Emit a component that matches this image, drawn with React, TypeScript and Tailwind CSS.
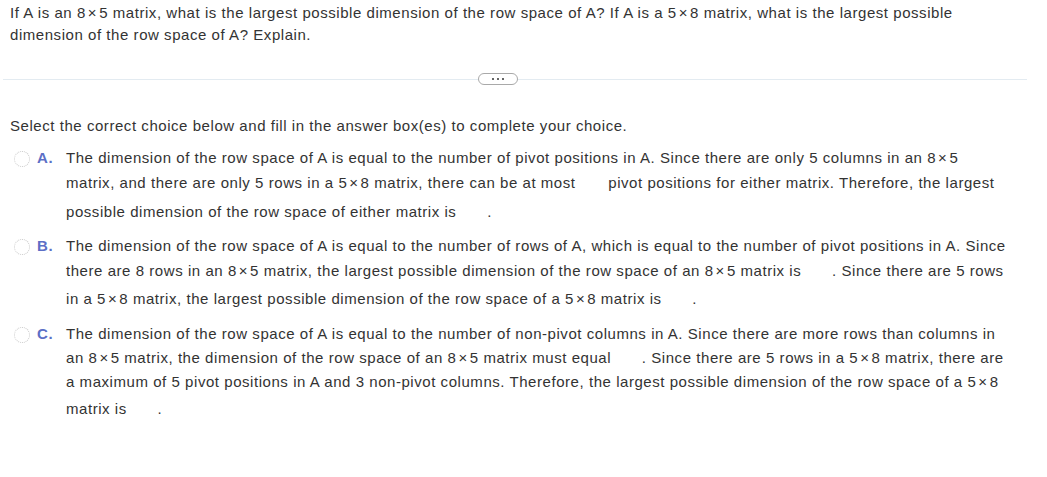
import React from "react";

const FONT = { fontFamily: '"Liberation Sans", Arial, sans-serif', letterSpacing: "0.55px" };

// Blank answer box (rendered invisible in the screenshot).
function Blank({ w = 30 }: { w?: number }) {
  return <span className="inline-block" style={{ width: w }} />;
}

function Times() {
  return <span className="mx-[2px]">×</span>;
}

function Radio() {
  return (
    <span className="mt-[3px] inline-block h-[16px] w-[16px] shrink-0 rounded-full border border-dotted border-[#c8c8c8] bg-white" />
  );
}

function Choice({
  label,
  lines,
  heights,
}: {
  label: string;
  lines: React.ReactNode[];
  heights: number[];
}) {
  return (
    <div className="flex pl-[14px]">
      <Radio />
      <span className="ml-[7px] w-[29px] font-bold text-[#5c6fc6]">{label}</span>
      <div>
        {lines.map((l, i) => (
          <div key={i} style={{ height: heights[i] }}>
            {l}
          </div>
        ))}
      </div>
    </div>
  );
}

export default function App() {
  return (
    <div className="h-[477px] w-[1047px] bg-white text-[15px] leading-[20px] text-[#333]" style={FONT}>
      <div className="px-[10px] pt-[3px]">
        <div className="h-[22px]">
          If A is an 8<Times />5 matrix, what is the largest possible dimension of the row space of A? If A is a 5
          <Times />8 matrix, what is the largest possible
        </div>
        <div className="h-[22px]">dimension of the row space of A? Explain.</div>
      </div>

      <div className="relative mx-[3px] mt-[32px] h-[1px] w-[1024px] bg-[#e3ebf1]">
        <div className="absolute left-[475px] top-[-6px] flex h-[12px] w-[40px] items-center justify-center gap-[3px] rounded-full border border-[#a9a9a9] bg-white">
          <span className="h-[2px] w-[2px] bg-[#666]" />
          <span className="h-[2px] w-[2px] bg-[#666]" />
          <span className="h-[2px] w-[2px] bg-[#666]" />
        </div>
      </div>

      <div className="px-[10px] pt-[36px]">
        Select the correct choice below and fill in the answer box(es) to complete your choice.
      </div>

      <div className="mt-[12px]">
        <Choice
          label="A."
          heights={[25, 29, 34]}
          lines={[
            <>
              The dimension of the row space of A is equal to the number of pivot positions in A. Since there are only 5 columns in an 8
              <Times />5
            </>,
            <>
              matrix, and there are only 5 rows in a 5<Times />8 matrix, there can be at most <Blank w={28} />
              pivot positions for either matrix. Therefore, the largest
            </>,
            <>
              possible dimension of the row space of either matrix is <Blank w={26} />.
            </>,
          ]}
        />
      </div>
      <div>
        <Choice
          label="B."
          heights={[25, 28, 35]}
          lines={[
            <>
              The dimension of the row space of A is equal to the number of rows of A, which is equal to the number of pivot positions in A. Since
            </>,
            <>
              there are 8 rows in an 8<Times />5 matrix, the largest possible dimension of the row space of an 8<Times />5 matrix is{" "}
              <Blank w={26} />. Since there are 5 rows
            </>,
            <>
              in a 5<Times />8 matrix, the largest possible dimension of the row space of a 5<Times />8 matrix is <Blank w={26} />.
            </>,
          ]}
        />
      </div>
      <div>
        <Choice
          label="C."
          heights={[24, 24, 27, 25]}
          lines={[
            <>
              The dimension of the row space of A is equal to the number of non-pivot columns in A. Since there are more rows than columns in
            </>,
            <>
              an 8<Times />5 matrix, the dimension of the row space of an 8<Times />5 matrix must equal <Blank w={26} />. Since there are 5
              rows in a 5<Times />8 matrix, there are
            </>,
            <>
              a maximum of 5 pivot positions in A and 3 non-pivot columns. Therefore, the largest possible dimension of the row space of a 5
              <Times />8
            </>,
            <>
              matrix is <Blank w={26} />.
            </>,
          ]}
        />
      </div>
    </div>
  );
}
